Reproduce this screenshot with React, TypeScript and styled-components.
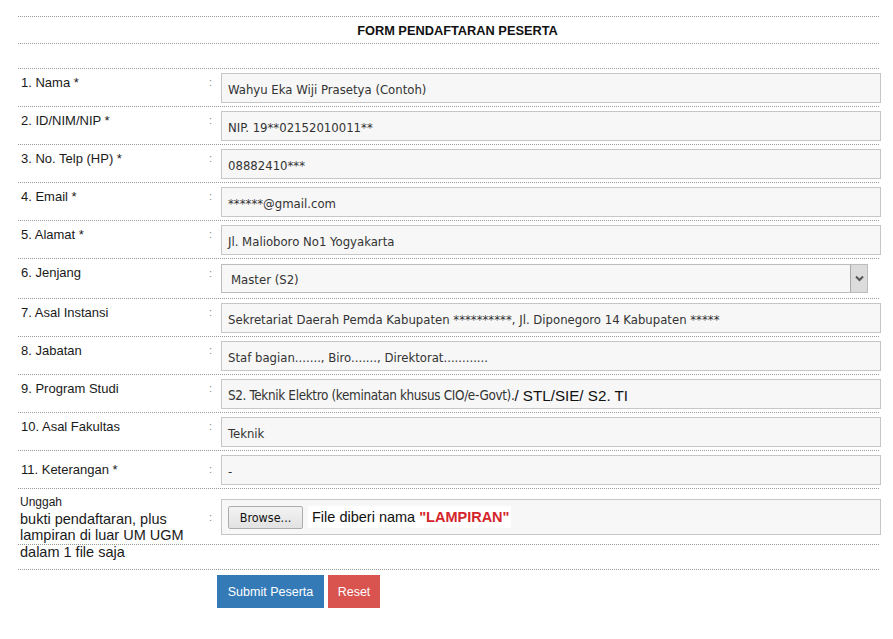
import React from "react";
import styled, { createGlobalStyle } from "styled-components";

const Global = createGlobalStyle`
  html, body { margin: 0; padding: 0; background: #fff; }
  body { font-family: "Liberation Sans", Arial, sans-serif; color: #222; }
  * { box-sizing: border-box; }
`;

const Page = styled.div`
  padding: 16px 0 0 18px;
  width: 893px;
  height: 639px;
  overflow: hidden;
`;

const Form = styled.form`
  width: 861px;
`;

const TitleRow = styled.div`
  border-top: 1px dotted #9a9a9a;
  height: 27px;
  display: flex;
  align-items: center;
  justify-content: center;
  padding-left: 18px;
  font-size: 12.8px;
  font-weight: bold;
  color: #111;
`;

const Spacer = styled.div<{ $h: number }>`
  border-top: 1px dotted #9a9a9a;
  height: ${(p) => p.$h}px;
`;

const Row = styled.div<{ $pt: number; $pb: number; $h?: number }>`
  display: grid;
  grid-template-columns: 187px 16px 660px;
  align-items: start;
  border-top: 1px dotted #9a9a9a;
  padding: ${(p) => p.$pt}px 0 ${(p) => p.$pb}px;
  ${(p) => (p.$h ? `height: ${p.$h}px;` : "")}
`;

const Label = styled.div<{ $top?: number }>`
  font-size: 13px;
  line-height: 15px;
  padding: ${(p) => p.$top ?? 2}px 0 0 3px;
  color: #1a1a1a;
`;

const UploadLabel = styled.div`
  font-size: 14.5px;
  line-height: 16.5px;
  padding-left: 2px;
  margin-top: -6px;
  color: #1a1a1a;
`;

const Small = styled.span`
  font-size: 12px;
`;

const Colon = styled.div<{ $top?: number }>`
  font-size: 11px;
  color: #888;
  padding: ${(p) => p.$top ?? 3}px 0 0 4px;
  line-height: 12px;
`;

const Field = styled.div`
  height: 30px;
  border: 1px solid #c6c6c6;
  background: #f7f7f7;
  padding: 3px 6px 0;
  display: flex;
  align-items: center;
  font-family: "DejaVu Sans Condensed", "DejaVu Sans", sans-serif;
  font-size: 13px;
  color: #333;
  white-space: nowrap;
  overflow: hidden;
`;

const Narrow = styled.span`
  font-family: "DejaVu Sans Condensed", "DejaVu Sans", sans-serif;
  font-size: 13.4px;
  letter-spacing: -0.35px;
`;

const Wide = styled.span`
  font-family: "Liberation Sans", Arial, sans-serif;
  font-size: 15.2px;
  color: #111;
`;

const SelectBox = styled.div`
  width: 647px;
  height: 29px;
  border: 1px solid #bcbcbc;
  background: #f7f7f7;
  display: flex;
  align-items: stretch;
  font-family: "DejaVu Sans Condensed", "DejaVu Sans", sans-serif;
  font-size: 13px;
  color: #333;
`;

const SelectText = styled.div`
  flex: 1;
  display: flex;
  align-items: center;
  padding: 2px 0 0 9px;
`;

const SelectArrow = styled.div`
  width: 17px;
  background: #dcdcdc;
  border-left: 1px solid #a8a8a8;
  display: flex;
  align-items: center;
  justify-content: center;
`;

const UploadBox = styled.div`
  height: 36px;
  border: 1px solid #c6c6c6;
  background: #f7f7f7;
  display: flex;
  align-items: center;
  padding-left: 6px;
  gap: 5px;
`;

const BrowseButton = styled.button`
  width: 75px;
  height: 23px;
  border: 1px solid #adadad;
  border-radius: 2px;
  background: linear-gradient(#f3f3f3, #e2e2e2);
  font-family: "DejaVu Sans Condensed", "DejaVu Sans", sans-serif;
  font-size: 12.5px;
  color: #111;
  padding: 0;
`;

const FileNote = styled.span`
  background: #fff;
  font-size: 14.5px;
  padding: 3px 2px 3px 4px;
  color: #111;
`;

const Red = styled.b`
  color: #d4242c;
`;

const ButtonRow = styled.div`
  border-top: 1px dotted #9a9a9a;
  padding: 5px 0 0 199px;
  display: flex;
  gap: 4px;
`;

const ActionButton = styled.button<{ $bg: string; $w: number }>`
  width: ${(p) => p.$w}px;
  height: 33px;
  border: none;
  border-radius: 0;
  background: ${(p) => p.$bg};
  color: #fff;
  font-family: "Liberation Sans", Arial, sans-serif;
  font-size: 12.5px;
  padding: 0;
`;

const Chevron = () => (
  <svg width="9" height="7" viewBox="0 0 9 7">
    <path d="M1 1.5 L4.5 5 L8 1.5" stroke="#555" strokeWidth="2" fill="none" />
  </svg>
);

const fields: { label: string; value: React.ReactNode }[] = [
  { label: "1. Nama *", value: "Wahyu Eka Wiji Prasetya (Contoh)" },
  { label: "2. ID/NIM/NIP *", value: "NIP. 19**02152010011**" },
  { label: "3. No. Telp (HP) *", value: "08882410***" },
  { label: "4. Email *", value: "******@gmail.com" },
  { label: "5. Alamat *", value: "Jl. Malioboro No1 Yogyakarta" },
];

const fields2: { label: string; value: React.ReactNode; top?: number }[] = [
  {
    label: "7. Asal Instansi",
    value: "Sekretariat Daerah Pemda Kabupaten **********, Jl. Diponegoro 14 Kabupaten *****",
  },
  { label: "8. Jabatan", value: "Staf bagian......., Biro......., Direktorat............" },
  {
    label: "9. Program Studi",
    value: (
      <>
        <Narrow>S2. Teknik Elektro (keminatan khusus CIO/e-Govt).</Narrow>
        <Wide>/ STL/SIE/ S2. TI</Wide>
      </>
    ),
  },
  { label: "10. Asal Fakultas", value: "Teknik" },
  { label: "11. Keterangan *", value: "-", top: 7 },
];

export default function App() {
  return (
    <Page>
      <Global />
      <Form onSubmit={(e) => e.preventDefault()}>
        <TitleRow>FORM PENDAFTARAN PESERTA</TitleRow>
        <Spacer $h={25} />
        {fields.map((f) => (
          <Row key={f.label} $pt={4} $pb={3}>
            <Label>{f.label}</Label>
            <Colon>:</Colon>
            <Field>{f.value}</Field>
          </Row>
        ))}
        <Row $pt={5} $pb={5}>
          <Label $top={1}>6. Jenjang</Label>
          <Colon>:</Colon>
          <SelectBox>
            <SelectText>Master (S2)</SelectText>
            <SelectArrow>
              <Chevron />
            </SelectArrow>
          </SelectBox>
        </Row>
        {fields2.map((f) => (
          <Row key={f.label} $pt={4} $pb={3}>
            <Label $top={f.top}>{f.label}</Label>
            <Colon $top={f.top ? f.top + 1 : undefined}>:</Colon>
            <Field>{f.value}</Field>
          </Row>
        ))}
        <Row $pt={10} $pb={9} $h={56}>
          <UploadLabel>
            <Small>Unggah</Small>
            <br />
            bukti pendaftaran, plus
            <br />
            lampiran di luar UM UGM
            <br />
            dalam 1 file saja
          </UploadLabel>
          <Colon $top={12}>:</Colon>
          <UploadBox>
            <BrowseButton type="button">Browse...</BrowseButton>
            <FileNote>
              File diberi nama <Red>"LAMPIRAN"</Red>
            </FileNote>
          </UploadBox>
        </Row>
        <Spacer $h={25} />
        <ButtonRow>
          <ActionButton type="submit" $bg="#337ab7" $w={107}>
            Submit Peserta
          </ActionButton>
          <ActionButton type="reset" $bg="#d9534f" $w={52}>
            Reset
          </ActionButton>
        </ButtonRow>
      </Form>
    </Page>
  );
}
